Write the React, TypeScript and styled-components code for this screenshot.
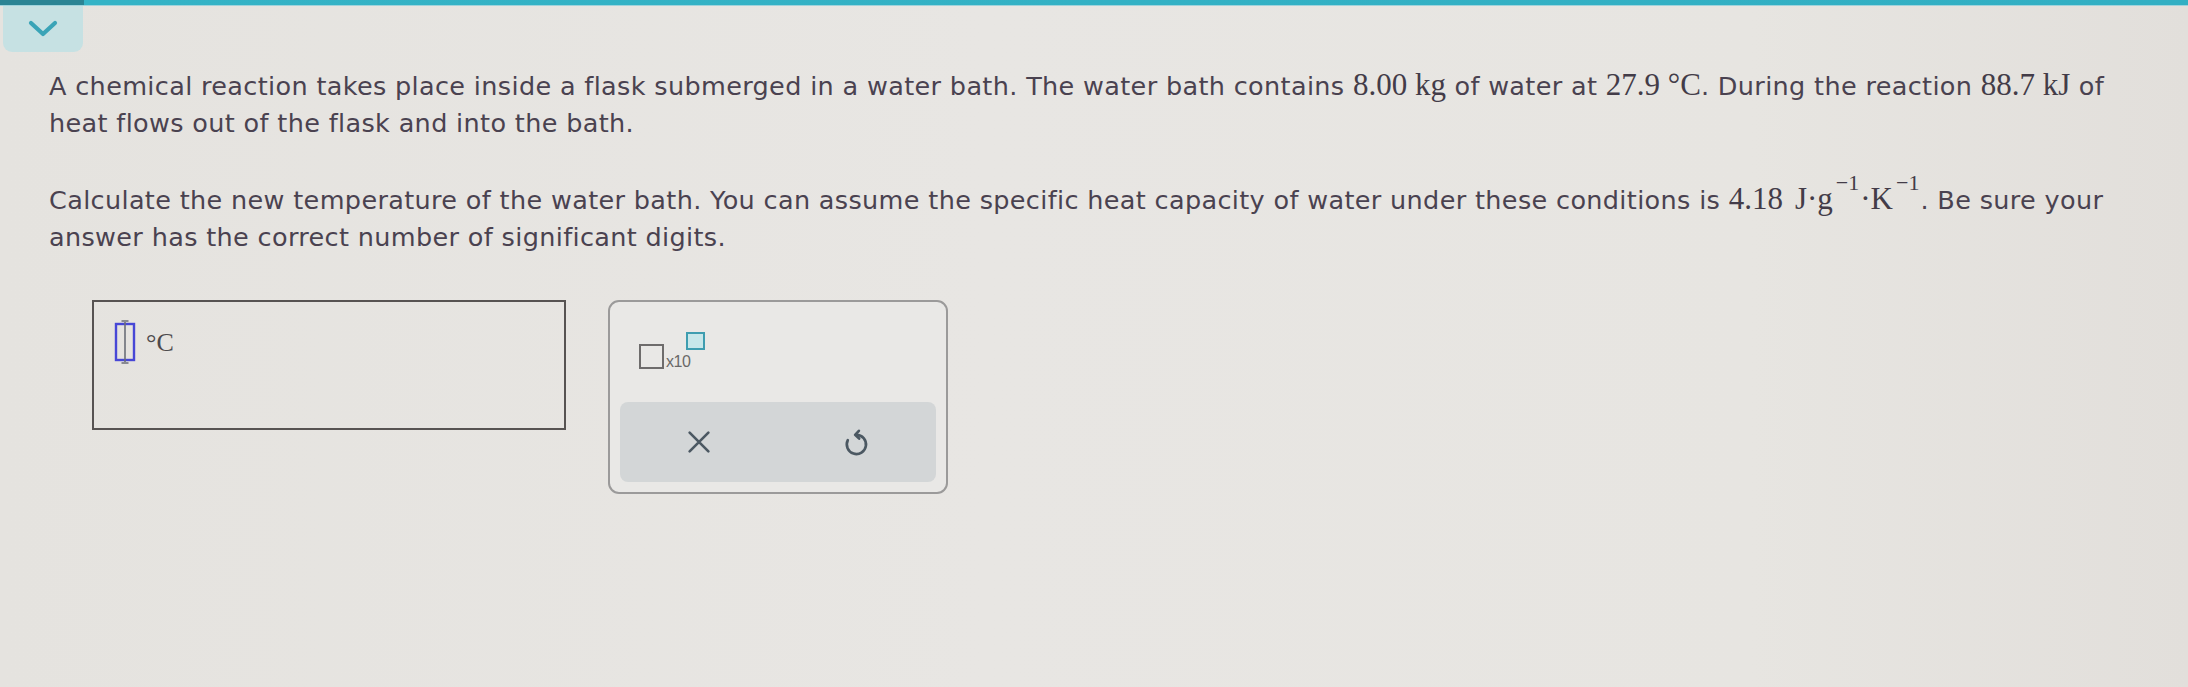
import React from "react";
import styled, { createGlobalStyle } from "styled-components";

const Global = createGlobalStyle`
  html, body { margin: 0; padding: 0; }
  body {
    width: 2188px;
    height: 687px;
    overflow: hidden;
    background: linear-gradient(90deg, #e5e3df 0%, #e8e6e3 45%, #e7e5e1 80%, #e2dfdb 100%);
    font-family: "DejaVu Sans", Verdana, sans-serif;
  }
`;

const Page = styled.div`
  display: flex;
  flex-direction: column;
  height: 687px;
`;

const TopBar = styled.div`
  height: 5px;
  background: linear-gradient(90deg, #2a8494 0px, #2a8494 84px, #34b3c6 84px, #32afc3 100%);
  border-bottom: 1px solid #9fd3dc;
`;

const Header = styled.div`
  display: flex;
  padding-left: 3px;
`;

const CollapseButton = styled.button`
  width: 80px;
  height: 46px;
  border: none;
  border-radius: 0 0 9px 9px;
  background: #c6e1e3;
  display: flex;
  align-items: center;
  justify-content: center;
  padding: 0;
  cursor: pointer;
`;

const Content = styled.div`
  padding: 14px 60px 0 49px;
  color: #4a4250;
`;

const Paragraph = styled.p<{ $gap?: number }>`
  margin: 0 0 ${(p) => p.$gap ?? 0}px 0;
  font-size: 25.5px;
  line-height: 37px;
  letter-spacing: 0.35px;
`;

const MathVal = styled.span`
  font-family: "Liberation Serif", "Times New Roman", serif;
  font-size: 31px;
  letter-spacing: 0;
  color: #433c48;
`;

const Wide = styled.span`
  display: inline-block;
  width: 12px;
`;

const Sup = styled.sup`
  font-family: "Liberation Serif", "Times New Roman", serif;
  font-size: 22px;
  line-height: 0;
  vertical-align: 0;
  position: relative;
  top: -19px;
  margin-left: 3px;
  margin-right: 1px;
`;

const AnswerRow = styled.div`
  display: flex;
  align-items: flex-start;
  gap: 42px;
  margin: 44px 0 0 43px;
`;

const AnswerBox = styled.div`
  width: 474px;
  height: 130px;
  border: 2px solid #575352;
  display: flex;
  align-items: flex-start;
  padding: 17px 0 0 20px;
  box-sizing: border-box;
  gap: 10px;
`;

const Unit = styled.span`
  font-family: "Liberation Serif", "Times New Roman", serif;
  font-size: 26px;
  color: #4d4a4d;
  margin-top: 9px;
`;

const Panel = styled.div`
  width: 340px;
  height: 194px;
  box-sizing: border-box;
  border: 2px solid #9b9a9a;
  border-radius: 11px;
  background: #e9e8e6;
  display: flex;
  flex-direction: column;
  padding: 0 10px 10px 10px;
`;

const SciRow = styled.div`
  display: flex;
  align-items: flex-start;
  height: 100px;
  padding: 30px 0 0 19px;
  box-sizing: border-box;
`;

const Slot = styled.div<{ $sup?: boolean }>`
  width: ${(p) => (p.$sup ? 19 : 25)}px;
  height: ${(p) => (p.$sup ? 18 : 25)}px;
  box-sizing: border-box;
  border: 2px solid ${(p) => (p.$sup ? "#3e9db0" : "#6e6c6c")};
  background: ${(p) => (p.$sup ? "#c7e7ea" : "transparent")};
  margin-top: ${(p) => (p.$sup ? 0 : 12)}px;
`;

const TimesTen = styled.span`
  font-family: "Liberation Sans", Arial, sans-serif;
  font-size: 16px;
  color: #6a6868;
  margin-top: 21px;
  margin-left: 2px;
  margin-right: -4px;
  letter-spacing: -0.5px;
`;

const Tray = styled.div`
  flex: 1;
  background: #d3d6d7;
  border-radius: 8px;
  display: grid;
  grid-template-columns: 1fr 1fr;
`;

const TrayButton = styled.button`
  border: none;
  background: transparent;
  display: flex;
  align-items: center;
  justify-content: center;
  padding: 0;
  cursor: pointer;
`;

const Chevron = () => (
  <svg width="32" height="20" viewBox="0 0 32 20">
    <path d="M4 4 L16 15 L28 4" fill="none" stroke="#3aa4b7" strokeWidth="4.2" strokeLinecap="round" strokeLinejoin="round" />
  </svg>
);

const CursorIcon = () => (
  <svg width="22" height="46" viewBox="0 0 22 46">
    <rect x="2" y="5" width="18" height="36" fill="none" stroke="#4747d6" strokeWidth="2.4" />
    <path d="M11 3 V43 M7.5 2 H14.5 M7.5 44 H14.5" stroke="#6b6e78" strokeWidth="1.6" fill="none" />
  </svg>
);

const XIcon = () => (
  <svg width="30" height="30" viewBox="0 0 24 24">
    <path d="M4.5 4.5 L19.5 19.5 M19.5 4.5 L4.5 19.5" stroke="#4b5862" strokeWidth="2.1" strokeLinecap="round" fill="none" />
  </svg>
);

const UndoIcon = () => (
  <svg width="32" height="32" viewBox="0 0 24 24">
    <path d="M11.5 6.6 A7.2 7.2 0 1 1 5.1 10.6" stroke="#4b5862" strokeWidth="2" strokeLinecap="round" fill="none" />
    <path d="M13.4 3.6 L10.6 6.6 L13.6 9.4" stroke="#4b5862" strokeWidth="2" strokeLinecap="round" strokeLinejoin="round" fill="none" />
  </svg>
);

export default function App() {
  return (
    <Page>
      <Global />
      <TopBar />
      <Header>
        <CollapseButton aria-label="collapse">
          <Chevron />
        </CollapseButton>
      </Header>
      <Content>
        <Paragraph $gap={38}>
          A chemical reaction takes place inside a flask submerged in a water bath. The water bath contains{" "}
          <MathVal>8.00 kg</MathVal> of water at <MathVal>27.9 °C</MathVal>. During the reaction{" "}
          <MathVal>88.7 kJ</MathVal> of heat flows out of the flask and into the bath.
        </Paragraph>
        <Paragraph>
          Calculate the new temperature of the water bath. You can assume the specific heat capacity of water under
          these conditions is{" "}
          <MathVal>
            4.18<Wide />J·g<Sup>−1</Sup>·K<Sup>−1</Sup>
          </MathVal>
          . Be sure your answer has the correct number of significant digits.
        </Paragraph>
        <AnswerRow>
          <AnswerBox>
            <CursorIcon />
            <Unit>°C</Unit>
          </AnswerBox>
          <Panel>
            <SciRow>
              <Slot />
              <TimesTen>x10</TimesTen>
              <Slot $sup />
            </SciRow>
            <Tray>
              <TrayButton aria-label="clear">
                <XIcon />
              </TrayButton>
              <TrayButton aria-label="undo">
                <UndoIcon />
              </TrayButton>
            </Tray>
          </Panel>
        </AnswerRow>
      </Content>
    </Page>
  );
}
